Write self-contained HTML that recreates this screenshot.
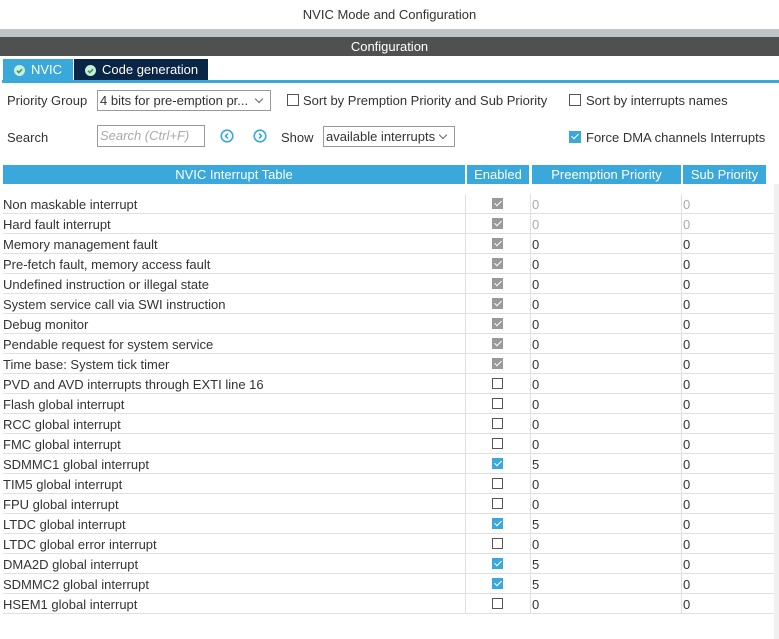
<!DOCTYPE html><html><head><style>
body{margin:0;width:779px;height:639px;background:#fff;font-family:"Liberation Sans",sans-serif;font-size:13px;color:#333;position:relative;overflow:hidden}
.a{position:absolute}
.cb{position:absolute;width:11px;height:11px;border:1px solid #555;background:#fff;box-sizing:border-box}
.cb.on{background:#3ba8db;border-color:#3ba8db}
.cb.gr{background:#999;border-color:#999}
.cb.on::after,.cb.gr::after{content:"";position:absolute;left:3px;top:0px;width:3px;height:6px;border:solid #fff;border-width:0 1.5px 1.5px 0;transform:rotate(45deg)}
.hd{position:absolute;top:165px;height:19px;background:#3ba8db;color:#fff;text-align:center;line-height:19px;font-size:13px}
.row{position:absolute;left:3px;width:771px;height:20px;border-bottom:1px solid #e0e0e0;box-sizing:border-box}
.row span{position:absolute;top:3px}
.sel{position:absolute;height:21px;border:1px solid #999;box-sizing:border-box;line-height:19px;padding-left:2px;color:#333}
.sel::after{content:"";position:absolute;right:8px;top:5px;width:5px;height:5px;border:solid #666;border-width:0 1px 1px 0;transform:rotate(45deg)}
.ic{display:inline-block;vertical-align:-2px;margin:0 6px 0 11px}
</style></head><body>
<div class="a" style="left:0;top:0;width:779px;height:29px;line-height:29px;text-align:center;color:#333">NVIC Mode and Configuration</div>
<div class="a" style="left:0;top:29px;width:779px;height:8px;background:#bec5c9"></div>
<div class="a" style="left:0;top:37px;width:779px;height:19px;background:#4f5150;color:#fff;text-align:center;line-height:19px">Configuration</div>
<div class="a" style="left:3px;top:59px;width:70px;height:21px;background:#3ba8db;color:#fff;line-height:21px"><svg class="ic" width="11" height="11"><circle cx="5.5" cy="5.5" r="5.5" fill="#c8efd8"/><path d="M3 5.7l1.8 1.8 3.3-3.3" stroke="#3a9a60" stroke-width="1.6" fill="none"/></svg>NVIC</div>
<div class="a" style="left:74px;top:59px;width:134px;height:21px;background:#0b2546;color:#fff;line-height:21px"><svg class="ic" width="11" height="11"><circle cx="5.5" cy="5.5" r="5.5" fill="#c8efd8"/><path d="M3 5.7l1.8 1.8 3.3-3.3" stroke="#3a9a60" stroke-width="1.6" fill="none"/></svg>Code generation</div>
<div class="a" style="left:2px;top:80px;width:777px;height:3px;background:#3ba8db"></div>
<div class="a" style="left:7px;top:93px">Priority Group</div>
<div class="sel" style="left:97px;top:90px;width:174px">4 bits for pre-emption pr...</div>
<div class="cb" style="left:287px;top:94px;width:12px;height:12px"></div>
<div class="a" style="left:303px;top:93px">Sort by Premption Priority and Sub Priority</div>
<div class="cb" style="left:569px;top:94px;width:12px;height:12px"></div>
<div class="a" style="left:586px;top:93px">Sort by interrupts names</div>
<div class="a" style="left:7px;top:130px">Search</div>
<div class="a" style="left:97px;top:125px;width:108px;height:22px;border:1px solid #999;box-sizing:border-box;color:#aaa;font-style:italic;line-height:20px;padding-left:2px">Search (Ctrl+F)</div>
<svg class="a" style="left:220px;top:129px" width="14" height="14"><circle cx="7" cy="7" r="5.8" stroke="#3ba8db" stroke-width="1.6" fill="none"/><path d="M8 4.5L5.5 7 8 9.5" stroke="#3ba8db" stroke-width="1.6" fill="none"/></svg>
<svg class="a" style="left:253px;top:129px" width="14" height="14"><circle cx="7" cy="7" r="5.8" stroke="#3ba8db" stroke-width="1.6" fill="none"/><path d="M6 4.5L8.5 7 6 9.5" stroke="#3ba8db" stroke-width="1.6" fill="none"/></svg>
<div class="a" style="left:281px;top:130px">Show</div>
<div class="sel" style="left:323px;top:126px;width:132px">available interrupts</div>
<div class="cb on" style="left:569px;top:131px;width:12px;height:12px"></div>
<div class="a" style="left:586px;top:130px">Force DMA channels Interrupts</div>
<div class="hd" style="left:3px;width:462px">NVIC Interrupt Table</div>
<div class="hd" style="left:467px;width:62px">Enabled</div>
<div class="hd" style="left:532px;width:149px">Preemption Priority</div>
<div class="hd" style="left:683px;width:83px">Sub Priority</div>
<div class="a" style="left:465px;top:194px;width:1px;height:420px;background:#e0e0e0"></div>
<div class="a" style="left:530px;top:194px;width:1px;height:420px;background:#e0e0e0"></div>
<div class="a" style="left:681px;top:194px;width:1px;height:420px;background:#e0e0e0"></div>
<div class="a" style="left:774px;top:184px;width:5px;height:455px;background:#f0f0f0"></div>
<div id="t"></div>
<script>
var r=[["Non maskable interrupt","gr","0","0",1],["Hard fault interrupt","gr","0","0",1],["Memory management fault","gr","0","0"],["Pre-fetch fault, memory access fault","gr","0","0"],["Undefined instruction or illegal state","gr","0","0"],["System service call via SWI instruction","gr","0","0"],["Debug monitor","gr","0","0"],["Pendable request for system service","gr","0","0"],["Time base: System tick timer","gr","0","0"],["PVD and AVD interrupts through EXTI line 16","","0","0"],["Flash global interrupt","","0","0"],["RCC global interrupt","","0","0"],["FMC global interrupt","","0","0"],["SDMMC1 global interrupt","on","5","0"],["TIM5 global interrupt","","0","0"],["FPU global interrupt","","0","0"],["LTDC global interrupt","on","5","0"],["LTDC global error interrupt","","0","0"],["DMA2D global interrupt","on","5","0"],["SDMMC2 global interrupt","on","5","0"],["HSEM1 global interrupt","","0","0"]];
var h="";r.forEach(function(x,i){var c=x[4]?"color:#aaa":"";h+='<div class="row" style="top:'+(194+20*i)+'px"><span style="left:0">'+x[0]+'</span><div class="cb '+x[1]+'" style="left:489px;top:4px"></div><span style="left:529px;'+c+'">'+x[2]+'</span><span style="left:680px;'+c+'">'+x[3]+'</span></div>'});
document.getElementById("t").innerHTML=h;
</script>
</body></html>
